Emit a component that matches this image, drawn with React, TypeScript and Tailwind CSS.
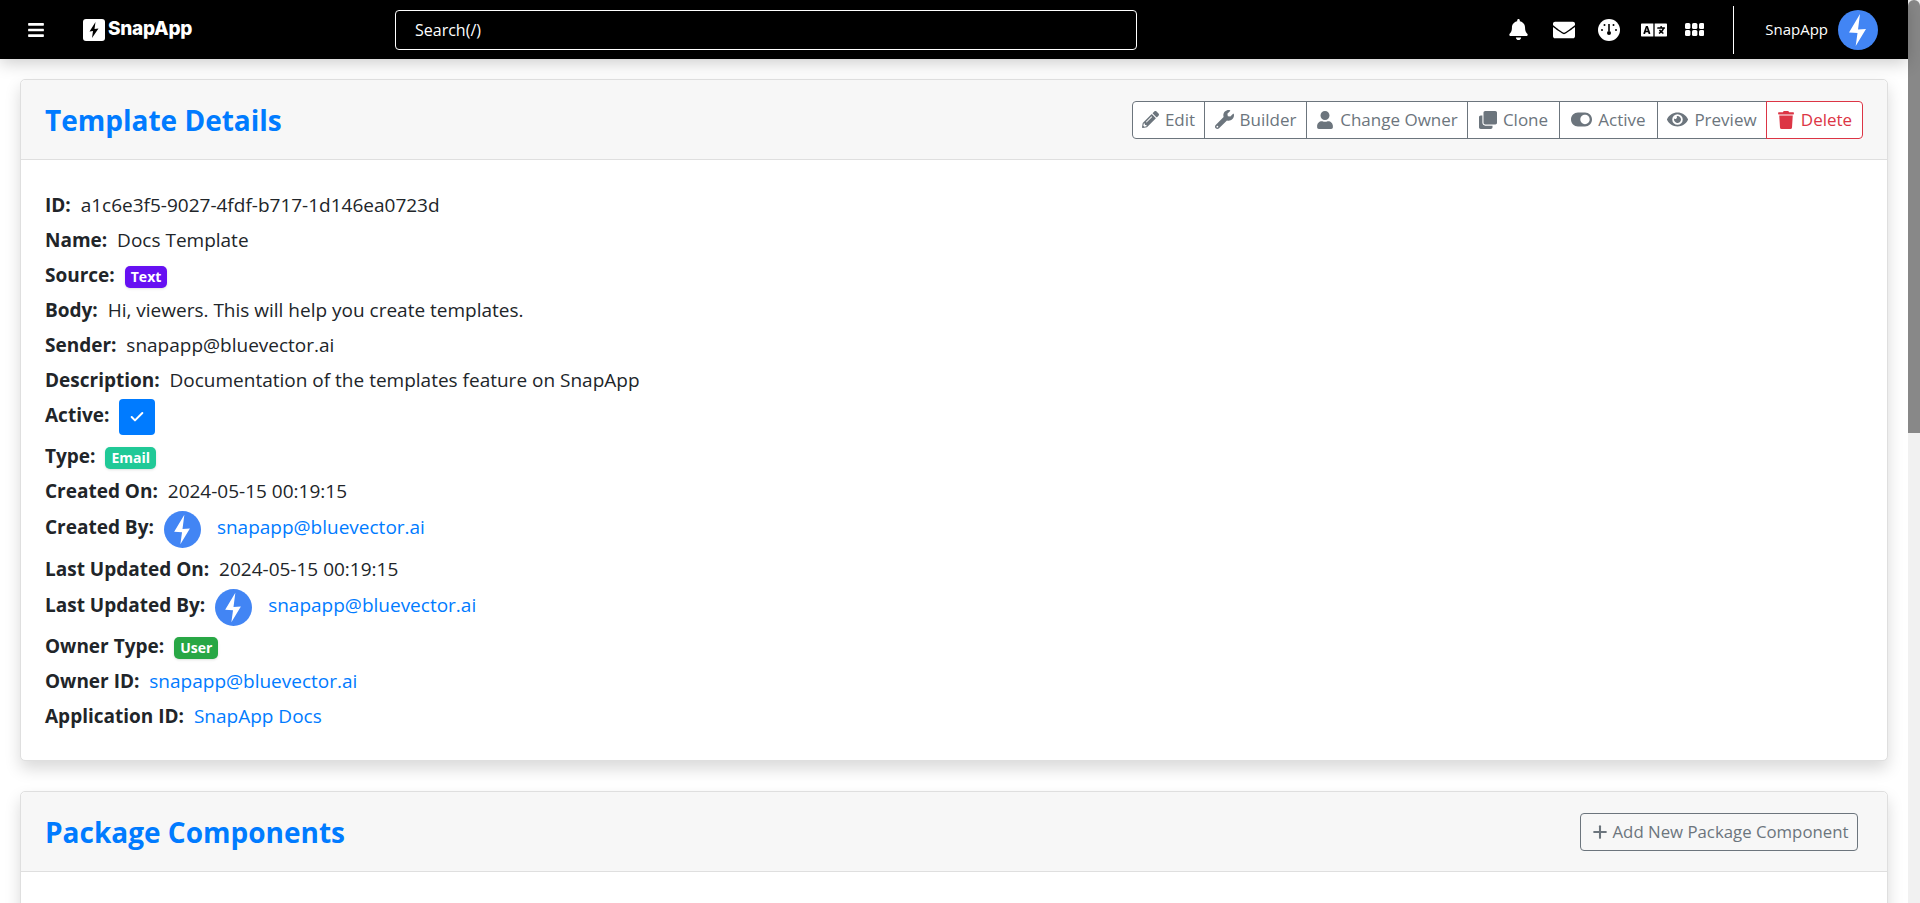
import React from 'react';
import {
  FaBars,
  FaBell,
  FaEnvelope,
  FaLanguage,
  FaPencilAlt,
  FaWrench,
  FaUser,
  FaClone,
  FaToggleOn,
  FaEye,
  FaTrash,
} from 'react-icons/fa';
import { Check, Plus } from 'lucide-react';

const BoltAvatar = ({ className }: { className: string }) => (
  <svg viewBox="0 0 40 40" className={className}>
    <circle cx="20" cy="20" r="20" fill="#4285f4" />
    <path d="M22 4 L11 22.5 L19.5 23 L17.7 36 L28 19 L20 19.5 Z" fill="#fff" />
  </svg>
);

const LogoMark = () => (
  <svg viewBox="0 0 22 22" className="w-[22px] h-[22px]">
    <rect width="22" height="22" rx="3" fill="#fff" />
    <path d="M12.5 3 L6.5 12.5 L10 12 L9 19 L15.5 9.5 L11.5 10 Z" fill="#000" />
  </svg>
);

// dial with ticks, the icon set has only a half gauge
const GaugeIcon = () => (
  <svg viewBox="0 0 22 22" className="ml-[23px] w-[22px] h-[22px]">
    <circle cx="11" cy="11" r="11" fill="#fff" />
    <path d="M11 5 L11 12" stroke="#000" strokeWidth="1.6" />
    <circle cx="11" cy="14" r="2" fill="#000" />
    <circle cx="6.5" cy="6" r="1" fill="#000" />
    <circle cx="15.5" cy="6" r="1" fill="#000" />
    <circle cx="4" cy="11" r="1" fill="#000" />
    <circle cx="18" cy="11" r="1" fill="#000" />
  </svg>
);

const GridIcon = () => (
  <svg viewBox="0 0 19 13" className="ml-[18px] w-[19px] h-[13px]" fill="#fff">
    {[0, 7, 14].map((x) =>
      [0, 7].map((y) => <rect key={`${x}-${y}`} x={x} y={y} width="5.4" height="6" rx="1.6" />)
    )}
  </svg>
);

const Badge = ({ color, children }: { color: string; children: React.ReactNode }) => (
  <span className={`${color} mt-[3px] text-white text-[14px] font-bold leading-[22px] h-[22px] px-[6px] rounded-[5px] shadow-sm`}>
    {children}
  </span>
);

const actions = [
  { label: 'Edit', icon: <FaPencilAlt className="w-[17px] h-[17px]" />, width: 'w-[73px]' },
  { label: 'Builder', icon: <FaWrench className="w-[19px] h-[19px]" />, width: 'w-[103px]' },
  { label: 'Change Owner', icon: <FaUser className="w-[18px] h-[18px]" />, width: 'w-[162px]' },
  { label: 'Clone', icon: <FaClone className="w-[18px] h-[18px]" />, width: 'w-[93px]' },
  { label: 'Active', icon: <FaToggleOn className="w-[21px] h-[21px]" />, width: 'w-[99px]' },
  { label: 'Preview', icon: <FaEye className="w-[21px] h-[21px]" />, width: 'w-[110px]' },
];

export default function App() {
  const link = 'text-[#007bff]';
  return (
    <div className="h-screen overflow-hidden flex bg-white text-[#212529] font-['Open_Sans',sans-serif]">
      <div className="flex-1 min-w-0 flex flex-col">
        {/* Navbar */}
        <nav className="h-[59px] shrink-0 bg-black text-white flex items-center shadow-[0_4px_16px_rgba(0,0,0,0.2)] relative z-10">
          <FaBars className="ml-[27px] w-[18px] h-[18px]" />
          <div className="ml-[38px] w-[123px] flex items-center gap-[3px]">
            <LogoMark />
            <span className="font-['Inter',sans-serif] font-extrabold text-[19px] tracking-[-0.3px]">SnapApp</span>
          </div>
          <div className="ml-[189px] w-[742px] h-[40px] border border-white rounded-[4px] flex items-center pl-[19px] text-[16px]">
            Search(/)
          </div>
          <div className="ml-auto flex items-center">
            <FaBell className="w-[19px] h-[21px]" />
            <FaEnvelope className="ml-[25px] w-[22px] h-[22px]" />
            <GaugeIcon />
            <FaLanguage className="ml-[21px] w-[26px] h-[26px]" />
            <GridIcon />
            <div className="ml-[29px] w-px h-[48px] bg-white" />
            <span className="ml-[31px] text-[15px]">SnapApp</span>
            <BoltAvatar className="ml-[10px] mr-[30px] w-[40px] h-[40px]" />
          </div>
        </nav>

        <main className="flex-1 min-h-0 overflow-hidden px-5 pt-5">
          {/* Template Details */}
          <section className="bg-white border border-[#dfdfdf] rounded-[5px] shadow-[0_8px_16px_rgba(0,0,0,0.15)]">
            <header className="h-[80px] bg-[#f7f7f7] border-b border-[#dfdfdf] rounded-t-[5px] flex items-center justify-between pl-[24px] pr-[24px]">
              <h2 className="text-[28px] font-bold text-[#007bff]">Template Details</h2>
              <div className="flex h-[38px] bg-white text-[17px] text-[#6c757d] whitespace-nowrap">
                {actions.map((a) => (
                  <div
                    key={a.label}
                    className={`flex items-center justify-center gap-[6px] border border-[#6c757d] -ml-px first:ml-0 first:rounded-l-[4px] ${a.width}`}
                  >
                    {a.icon}
                    <span>{a.label}</span>
                  </div>
                ))}
                <div className="flex items-center justify-center gap-[6px] border border-[#dc3545] text-[#dc3545] -ml-px rounded-r-[4px] w-[97px]">
                  <FaTrash className="w-[18px] h-[18px]" />
                  <span>Delete</span>
                </div>
              </div>
            </header>
            <div className="pl-[24px] pt-[32px] text-[19px] leading-[27px] h-[600px]">
              <p className="mb-2"><b>ID:</b>&nbsp; a1c6e3f5-9027-4fdf-b717-1d146ea0723d</p>
              <p className="mb-2"><b>Name:</b>&nbsp; Docs Template</p>
              <div className="mb-2 flex items-center h-[27px] gap-[10px]"><b>Source:</b><Badge color="bg-[#6610f2]">Text</Badge></div>
              <p className="mb-2"><b>Body:</b>&nbsp; Hi, viewers. This will help you create templates.</p>
              <p className="mb-2"><b>Sender:</b>&nbsp; snapapp@bluevector.ai</p>
              <p className="mb-[5px]"><b>Description:</b>&nbsp; Documentation of the templates feature on SnapApp</p>
              <div className="mb-2 flex items-center h-[36px] gap-[10px]">
                <b className="mb-[4px]">Active:</b>
                <span className="w-[36px] h-[36px] rounded-[4px] bg-[#007bff] flex items-center justify-center text-white"><Check className="w-[16px] h-[16px]" strokeWidth={3} /></span>
              </div>
              <div className="mb-2 flex items-center h-[27px] gap-[10px]"><b>Type:</b><Badge color="bg-[#20c997]">Email</Badge></div>
              <p className="mb-[5px]"><b>Created On:</b>&nbsp; 2024-05-15 00:19:15</p>
              <div className="mb-2 flex items-center h-[38px] gap-[10px]">
                <b className="mb-[4px]">Created By:</b>
                <BoltAvatar className="w-[37px] h-[37px]" />
                <span className={`ml-[6px] mb-[4px] ${link}`}>snapapp@bluevector.ai</span>
              </div>
              <p className="mb-[5px]"><b>Last Updated On:</b>&nbsp; 2024-05-15 00:19:15</p>
              <div className="mb-[7px] flex items-center h-[38px] gap-[10px]">
                <b className="mb-[4px]">Last Updated By:</b>
                <BoltAvatar className="w-[37px] h-[37px]" />
                <span className={`ml-[6px] mb-[4px] ${link}`}>snapapp@bluevector.ai</span>
              </div>
              <div className="mb-2 flex items-center h-[27px] gap-[10px]"><b>Owner Type:</b><Badge color="bg-[#28a745]">User</Badge></div>
              <p className="mb-2"><b>Owner ID:</b>&nbsp; <span className={link}>snapapp@bluevector.ai</span></p>
              <p><b>Application ID:</b>&nbsp; <span className={link}>SnapApp Docs</span></p>
            </div>
          </section>

          {/* Package Components */}
          <section className="mt-[30px] bg-white border border-[#dfdfdf] rounded-[5px] shadow-[0_8px_16px_rgba(0,0,0,0.15)] h-[200px]">
            <header className="h-[80px] bg-[#f7f7f7] border-b border-[#dfdfdf] rounded-t-[5px] flex items-center justify-between pl-[24px] pr-[29px]">
              <h2 className="text-[28px] font-bold text-[#007bff]">Package Components</h2>
              <div className="flex items-center justify-center gap-[3px] w-[278px] h-[38px] border border-[#6c757d] rounded-[4px] text-[16.8px] text-[#6c757d] whitespace-nowrap">
                <Plus className="w-[20px] h-[20px]" strokeWidth={2.5} />
                <span>Add New Package Component</span>
              </div>
            </header>
          </section>
        </main>
      </div>

      {/* Scrollbar */}
      <div className="w-3 shrink-0 bg-[#f1f1f1]">
        <div className="h-[433px] bg-[#888] rounded-t-[6px]" />
      </div>
    </div>
  );
}
